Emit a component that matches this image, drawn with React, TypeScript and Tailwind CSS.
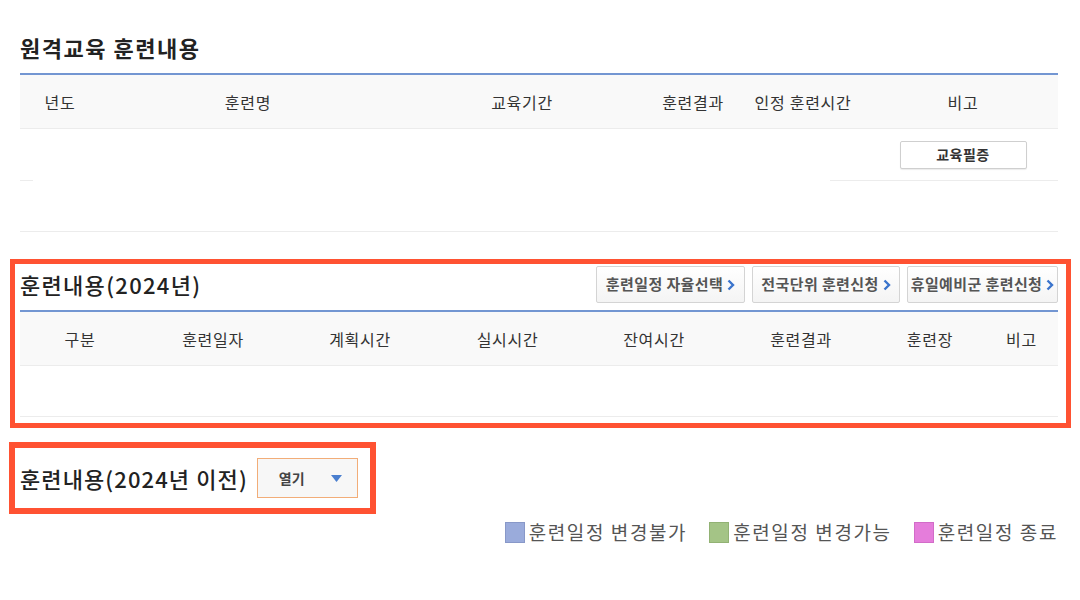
import React from 'react';

const font = { fontFamily: '"Noto Sans CJK KR", "Noto Sans", sans-serif' };

function Chevron() {
  return (
    <svg width="8" height="12" viewBox="0 0 8 12" className="ml-[4px]">
      <path d="M1.5 1.5 L6 6 L1.5 10.5" fill="none" stroke="#3a74cc" strokeWidth="2.4" />
    </svg>
  );
}

function LinkButton({ label, w }: { label: string; w: string }) {
  return (
    <button
      className={`${w} h-[37px] flex items-center justify-center border border-[#d4d4d4] rounded-[2px] bg-gradient-to-b from-white to-[#f4f4f4] text-[15px] font-bold text-[#555] tracking-[0.4px] whitespace-nowrap`}
    >
      {label}
      <Chevron />
    </button>
  );
}

export default function App() {
  const cols1 = ['년도', '훈련명', '교육기간', '훈련결과', '인정 훈련시간', '비고'];
  const cols2 = ['구분', '훈련일자', '계획시간', '실시시간', '잔여시간', '훈련결과', '훈련장', '비고'];

  return (
    <div className="w-[1080px] h-[600px] bg-white text-[#333] overflow-hidden" style={font}>
      {/* 원격교육 */}
      <div className="px-[20px] w-[1078px]">
        <h2 className="pt-[32px] h-[73px] text-[22px] font-bold text-[#222] leading-[30px] tracking-[1.5px]">원격교육 훈련내용</h2>
        <div className="border-t-2 border-[#7396d2]">
          <div className="grid grid-cols-[80px_296px_252px_90px_130px_190px] h-[54px] bg-[#f9f9f9] border-b border-[#ececec] items-center text-[16px] tracking-[0.7px] text-[#333]">
            {cols1.map((c) => (
              <div key={c} className="text-center whitespace-nowrap">{c}</div>
            ))}
          </div>
          <div className="grid grid-cols-[80px_296px_252px_90px_130px_190px] h-[51px] items-center">
            <div />
            <div />
            <div />
            <div />
            <div />
            <div className="flex justify-center">
              <button className="w-[127px] h-[28px] border border-[#cfcfcf] rounded-[2px] bg-white text-[14px] font-bold text-[#333] tracking-[0.5px] shadow-[0_1px_1px_rgba(0,0,0,0.08)]">
                교육필증
              </button>
            </div>
          </div>
          <div className="flex h-[1px]">
            <div className="w-[13px] bg-[#ececec]" />
            <div className="flex-1" />
            <div className="w-[228px] bg-[#ececec]" />
          </div>
          <div className="h-[51px] border-b border-[#ececec]" />
        </div>
      </div>

      {/* 훈련내용(2024년) */}
      <div className="mt-[27px] ml-[10px] w-[1061px] border-[5px] border-[#ff5232] pl-[5px] pr-[8px]">
        <div className="flex items-center justify-between h-[46px]">
          <h2 className="text-[22px] font-medium text-[#222] tracking-[1.3px] -mt-[5px]">훈련내용(2024년)</h2>
          <div className="flex gap-[7px] -mt-[5px]">
            <LinkButton label="훈련일정 자율선택" w="w-[149px]" />
            <LinkButton label="전국단위 훈련신청" w="w-[148px]" />
            <LinkButton label="휴일예비군 훈련신청" w="w-[151px]" />
          </div>
        </div>
        <div className="border-t-2 border-[#7396d2]">
          <div className="grid grid-cols-[120px_146px_148px_147px_146px_148px_110px_73px] h-[54px] bg-[#f9f9f9] border-b border-[#ececec] items-center text-[16px] tracking-[0.7px] text-[#333]">
            {cols2.map((c, i) => (
              <div key={i} className="text-center whitespace-nowrap">{c}</div>
            ))}
          </div>
          <div className="h-[51px] border-b border-[#ececec]" />
        </div>
        <div className="h-[6px]" />
      </div>

      {/* 훈련내용(2024년 이전) */}
      <div className="mt-[14px] ml-[9px] w-[367px] border-[6px] border-[#ff5232] pl-[5px] h-[72px] flex items-center">
        <h2 className="text-[22px] font-medium text-[#222] whitespace-nowrap tracking-[1.1px]">훈련내용(2024년 이전)</h2>
        <button className="ml-[9px] w-[101px] h-[40px] border border-[#f2ad78] bg-[#f7f7f7] flex items-center text-[14px] font-bold text-[#444] pl-[21px]">
          열기
          <svg width="11" height="7" viewBox="0 0 11 7" className="ml-[26px]">
            <path d="M0 0 H11 L5.5 7 Z" fill="#4a7fcf" />
          </svg>
        </button>
      </div>

      {/* legend */}
      <div className="mt-[4px] w-[1058px] flex justify-end items-center gap-[22px] text-[19px] tracking-[1.6px] text-[#555]">
        <div className="flex items-center gap-[4px]">
          <span className="w-[20px] h-[21px] bg-[#9aabdb] border border-[#8898c8]" />
          훈련일정 변경불가
        </div>
        <div className="flex items-center gap-[4px]">
          <span className="w-[20px] h-[21px] bg-[#a4c486] border border-[#92b274]" />
          훈련일정 변경가능
        </div>
        <div className="flex items-center gap-[4px]">
          <span className="w-[20px] h-[21px] bg-[#e57ddb] border border-[#d26cc8]" />
          훈련일정 종료
        </div>
      </div>
    </div>
  );
}
